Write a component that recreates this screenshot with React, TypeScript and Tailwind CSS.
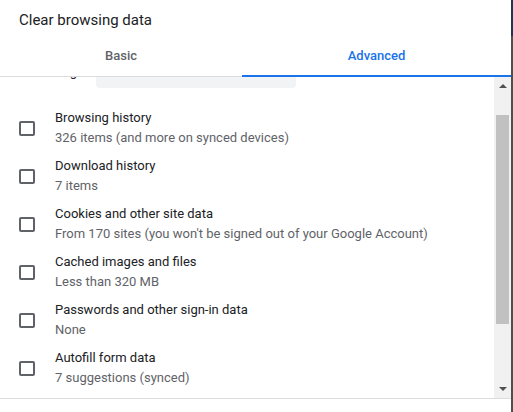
import React from "react";

const items = [
  { title: "Browsing history", sub: "326 items (and more on synced devices)" },
  { title: "Download history", sub: "7 items" },
  { title: "Cookies and other site data", sub: "From 170 sites (you won't be signed out of your Google Account)" },
  { title: "Cached images and files", sub: "Less than 320 MB" },
  { title: "Passwords and other sign-in data", sub: "None" },
  { title: "Autofill form data", sub: "7 suggestions (synced)" },
];

function Checkbox() {
  return <div className="w-[16px] h-[15px] border-2 border-[#5f6368] rounded-[2px] shrink-0" />;
}

export default function App() {
  return (
    <div className="w-[513px] h-[412px] bg-white flex overflow-hidden" style={{ fontFamily: "Roboto, 'Liberation Sans', sans-serif" }}>
      <div className="w-[511px] h-full flex flex-col">
        {/* Dialog header */}
        <div className="h-[36px] pl-[19px] flex items-center text-[15px] text-[#202124] pt-[4px]">
          Clear browsing data
        </div>
        <div className="flex h-[41px] border-b border-[#dadce0]">
          <div className="w-[242px] flex items-center justify-center text-[13px] font-medium text-[#5f6368]">Basic</div>
          <div className="w-[269px] flex items-center justify-center text-[13px] font-medium text-[#1a73e8] border-b-2 border-[#1a73e8] -mb-px pt-[1px]">
            Advanced
          </div>
        </div>
        {/* Scrollable body */}
        <div className="h-[322px] flex border-b border-[#dadce0]">
          <div className="w-[494px] overflow-hidden">
            <div className="-mt-[21px]">
              <div className="h-8 flex items-center pl-[19px]">
                <div className="w-[77px] text-[13px] text-[#202124]">Time range</div>
                <div className="w-[200px] h-8 bg-[#f1f3f4] rounded" />
              </div>
              <div className="mt-[16px]">
                {items.map((it) => (
                  <div key={it.title} className="h-12 flex items-center pl-[19px]">
                    <Checkbox />
                    <div className="ml-[20px] flex flex-col text-[13px] leading-[20px]">
                      <span className="text-[#202124]">{it.title}</span>
                      <span className="text-[#5f6368]">{it.sub}</span>
                    </div>
                  </div>
                ))}
              </div>
            </div>
          </div>
          {/* Scrollbar */}
          <div className="w-[17px] bg-[#f1f1f1] flex flex-col items-center">
            <div className="h-[17px] w-full flex items-center justify-center">
              <svg width="8" height="5" viewBox="0 0 8 5"><path d="M0 5 L4 1 L8 5 Z" fill="#505050" /></svg>
            </div>
            <div className="h-[21px]" />
            <div className="w-[13px] h-[209px] bg-[#c1c1c1]" />
            <div className="flex-1" />
            <div className="h-[17px] w-full flex items-center justify-center">
              <svg width="8" height="5" viewBox="0 0 8 5"><path d="M0 0 L8 0 L4 4 Z" fill="#505050" /></svg>
            </div>
          </div>
        </div>
        <div className="flex-1" />
      </div>
      {/* Window edge */}
      <div className="w-[2px] h-full flex flex-col">
        <div className="h-[36px] bg-[#1f3552]" />
        <div className="flex-1 bg-[#4f4f4f]" />
      </div>
    </div>
  );
}
